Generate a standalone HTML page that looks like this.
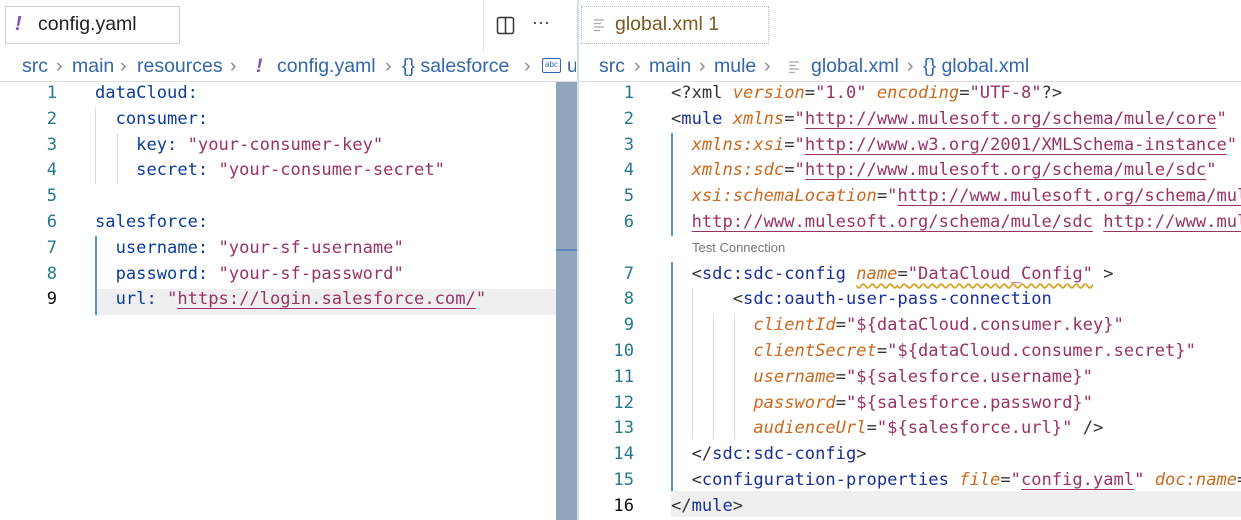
<!DOCTYPE html>
<html><head><meta charset="utf-8"><style>
*{margin:0;padding:0;box-sizing:border-box}
body{width:1241px;height:520px;overflow:hidden;background:#fff;position:relative;font-family:"Liberation Sans",sans-serif}
.abs{position:absolute}
.code{font-family:"DejaVu Sans Mono","Liberation Mono",monospace;font-size:17.1px;white-space:pre;line-height:25.8px;color:#333}
.ln{color:#237893;text-align:right;width:40px}
.k{color:#0b3c99}.s{color:#993366}.a{color:#c9691f;font-style:italic}.t{color:#1a2f9a}
.u{text-decoration:underline;text-decoration-color:#993366;text-underline-offset:4px}
.bc{font-size:19.5px;color:#3366aa;white-space:pre;top:55px}
.g{color:#888}
</style></head><body>
<!-- tabs -->
<div class="abs" style="left:5px;top:6px;width:175px;height:38px;border:1px solid #cfcfcf"></div>
<div class="abs" style="left:15px;top:13px;font-size:20px;color:#8a4fb5;font-style:italic;font-weight:bold">!</div>
<div class="abs" style="left:38px;top:13px;font-size:19.5px;color:#222">config.yaml</div>
<div class="abs" style="left:483px;top:0;width:1px;height:52px;background:#e4e4e4"></div>
<svg class="abs" style="left:496px;top:16px" width="20" height="20"><rect x="1.5" y="1.5" width="16" height="16" rx="2" fill="none" stroke="#333" stroke-width="1.5"/><line x1="9.5" y1="2" x2="9.5" y2="17" stroke="#333" stroke-width="1.5"/></svg>
<div class="abs" style="left:532px;top:12px;font-size:18px;color:#333">···</div>
<div class="abs" style="left:577px;top:0;width:2px;height:520px;background:#cfe0ee"></div>
<div class="abs" style="left:581px;top:6px;width:188px;height:38px;border:1px dotted #bbb"></div>
<svg class="abs" style="left:594px;top:18px" width="12" height="14"><g stroke="#aaa" stroke-width="1.3"><line x1="0" y1="2" x2="10" y2="2"/><line x1="0" y1="5.5" x2="7" y2="5.5"/><line x1="0" y1="9" x2="10" y2="9"/><line x1="0" y1="12.5" x2="6" y2="12.5"/></g></svg>
<div class="abs" style="left:615px;top:13px;font-size:19.5px;color:#7a5a1e">global.xml 1</div>
<!-- breadcrumbs left -->
<div class="abs bc" style="left:22px">src</div>
<div class="abs bc g" style="left:56px">›</div>
<div class="abs bc" style="left:72px">main</div>
<div class="abs bc g" style="left:120px">›</div>
<div class="abs bc" style="left:137px">resources</div>
<div class="abs bc g" style="left:230px">›</div>
<div class="abs bc" style="left:256px;color:#8a4fb5;font-style:italic;font-weight:bold">!</div>
<div class="abs bc" style="left:277px">config.yaml</div>
<div class="abs bc g" style="left:385px">›</div>
<div class="abs bc" style="left:402px">{} salesforce</div>
<div class="abs bc g" style="left:524px">›</div>
<div class="abs" style="left:542px;top:58px;width:19px;height:15px;border:1.3px solid #3366aa;border-radius:2px;font-size:8px;color:#3366aa;text-align:center;line-height:12px">abc</div>
<div class="abs bc" style="left:567px;width:9px;overflow:hidden">u</div>
<!-- breadcrumbs right -->
<div class="abs bc" style="left:599px">src</div>
<div class="abs bc g" style="left:634px">›</div>
<div class="abs bc" style="left:649px">main</div>
<div class="abs bc g" style="left:699px">›</div>
<div class="abs bc" style="left:714px">mule</div>
<div class="abs bc g" style="left:764px">›</div>
<svg class="abs" style="left:789px;top:60px" width="12" height="14"><g stroke="#aaa" stroke-width="1.3"><line x1="0" y1="2" x2="10" y2="2"/><line x1="0" y1="5.5" x2="7" y2="5.5"/><line x1="0" y1="9" x2="10" y2="9"/><line x1="0" y1="12.5" x2="6" y2="12.5"/></g></svg>
<div class="abs bc" style="left:811px">global.xml</div>
<div class="abs bc g" style="left:907px">›</div>
<div class="abs bc" style="left:923px">{} global.xml</div>
<div class="abs" style="left:0;top:81px;width:1241px;height:1px;background:#ddd"></div>
<!-- scrollbar -->
<div class="abs" style="left:556px;top:82px;width:21px;height:438px;background:#8fa6bd"></div>
<div class="abs" style="left:556px;top:249px;width:21px;height:2px;background:#5a88b8"></div>
<!-- left editor -->
<div class="abs" style="left:95px;top:289px;width:461px;height:26px;background:#efefef"></div>
<div class="abs" style="left:95px;top:107px;width:1px;height:77px;background:#ddd"></div>
<div class="abs" style="left:117px;top:133px;width:1px;height:51px;background:#ddd"></div>
<div class="abs" style="left:95px;top:236px;width:1.5px;height:79px;background:#5a8fd0"></div>
<div class="abs code ln" style="left:17px;top:81px">1
2
3
4
5
6
7
8
<span style="color:#111">9</span></div>
<div class="abs code" style="left:95px;top:81px"><span class="k">dataCloud:</span>
  <span class="k">consumer:</span>
    <span class="k">key:</span> <span class="s">"your-consumer-key"</span>
    <span class="k">secret:</span> <span class="s">"your-consumer-secret"</span>

<span class="k">salesforce:</span>
  <span class="k">username:</span> <span class="s">"your-sf-username"</span>
  <span class="k">password:</span> <span class="s">"your-sf-password"</span>
  <span class="k">url:</span> <span class="s">"<span class="u">https://login.salesforce.com/</span>"</span></div>
<!-- right editor -->
<div class="abs" style="left:671px;top:491px;width:570px;height:26px;background:#efefef"></div>
<div class="abs" style="left:671px;top:133px;width:1.5px;height:103px;background:#5a8fd0"></div>
<div class="abs" style="left:671px;top:262px;width:1.5px;height:229px;background:#5a8fd0"></div>
<div class="abs" style="left:692px;top:288px;width:1px;height:151px;background:#ddd"></div>
<div class="abs" style="left:713px;top:314px;width:1px;height:125px;background:#ddd"></div>
<div class="abs" style="left:734px;top:314px;width:1px;height:125px;background:#ddd"></div>
<div class="abs code ln" style="left:594px;top:81px">1
2
3
4
5
6

7
8
9
10
11
12
13
14
15
<span style="color:#111">16</span></div>
<div class="abs" style="left:692px;top:240px;font-size:13px;color:#777">Test Connection</div>
<div class="abs" style="left:671px;top:81px;width:570px;height:439px;overflow:hidden">
<div class="code">&lt;?xml <span class="a">version</span>=<span class="s">"1.0"</span> <span class="a">encoding</span>=<span class="s">"UTF-8"</span>?&gt;
&lt;<span class="t">mule</span> <span class="a">xmlns</span>=<span class="s">"<span class="u">http://www.mulesoft.org/schema/mule/core</span>"</span>
  <span class="a">xmlns:xsi</span>=<span class="s">"<span class="u">http://www.w3.org/2001/XMLSchema-instance</span>"</span>
  <span class="a">xmlns:sdc</span>=<span class="s">"<span class="u">http://www.mulesoft.org/schema/mule/sdc</span>"</span>
  <span class="a">xsi:schemaLocation</span>=<span class="s">"<span class="u">http://www.mulesoft.org/schema/mule/core</span></span>
  <span class="s"><span class="u">http://www.mulesoft.org/schema/mule/sdc</span> <span class="u">http://www.mulesoft.org</span></span>

  &lt;<span class="t">sdc:sdc-config</span> <span style="text-decoration:underline wavy #d8a020;text-underline-offset:4px"><span class="a">name</span>=<span class="s">"DataCloud_Config"</span></span> &gt;
      &lt;<span class="t">sdc:oauth-user-pass-connection</span>
        <span class="a">clientId</span>=<span class="s">"${dataCloud.consumer.key}"</span>
        <span class="a">clientSecret</span>=<span class="s">"${dataCloud.consumer.secret}"</span>
        <span class="a">username</span>=<span class="s">"${salesforce.username}"</span>
        <span class="a">password</span>=<span class="s">"${salesforce.password}"</span>
        <span class="a">audienceUrl</span>=<span class="s">"${salesforce.url}"</span> /&gt;
  &lt;/<span class="t">sdc:sdc-config</span>&gt;
  &lt;<span class="t">configuration-properties</span> <span class="a">file</span>=<span class="s">"<span class="u">config.yaml</span>"</span> <span class="a">doc:name</span>="Configuration"
&lt;/<span class="t">mule</span>&gt;</div></div>
</body></html>
